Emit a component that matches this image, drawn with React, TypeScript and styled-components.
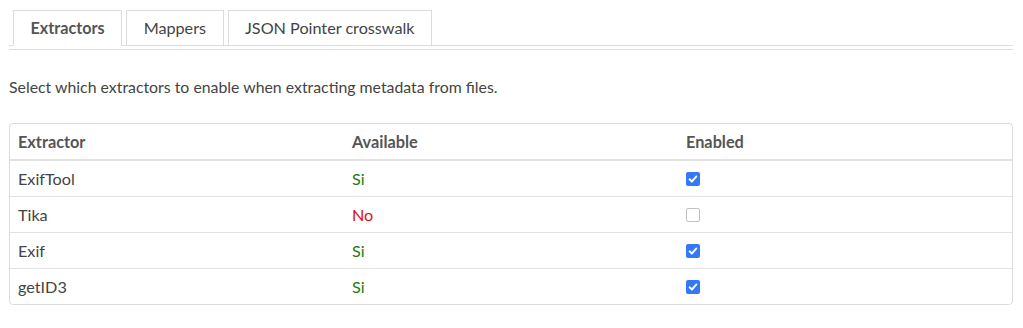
import styled, { createGlobalStyle } from 'styled-components'

const GlobalStyle = createGlobalStyle`
	html, body {
		margin: 0;
		padding: 0;
		background: #fff;
	}
	body {
		font-family: Lato, 'Noto Sans', sans-serif;
		color: #4a4a4a;
	}
	* {
		box-sizing: border-box;
	}
`

type Extractor = {
	name: string
	available: boolean
	enabled: boolean
}

const extractors: Extractor[] = [
	{ name: 'ExifTool', available: true, enabled: true },
	{ name: 'Tika', available: false, enabled: false },
	{ name: 'Exif', available: true, enabled: true },
	{ name: 'getID3', available: true, enabled: true },
]

const tabs = ['Extractors', 'Mappers', 'JSON Pointer crosswalk']

const CheckBox: React.FC<{ checked: boolean }> = ({ checked }) => (
	<Box $checked={checked}>
		{checked && (
			<svg width="12" height="12" viewBox="0 0 12 12">
				<path d="M2.6 6.3 L4.9 8.5 L9.4 3.4" fill="none" stroke="#fff" strokeWidth="1.9" strokeLinecap="round" strokeLinejoin="round" />
			</svg>
		)}
	</Box>
)

const App: React.FC = () => {
	return (
		<>
			<GlobalStyle />
			<Page>
				<TabList>
					{tabs.map((t, i) => (
						<Tab key={t} $active={i === 0}>
							{t}
						</Tab>
					))}
				</TabList>
				<Panel>
					<Intro>Select which extractors to enable when extracting metadata from files.</Intro>
					<TableWrap>
						<Table>
							<thead>
								<tr>
									<Th>Extractor</Th>
									<Th>Available</Th>
									<Th>Enabled</Th>
								</tr>
							</thead>
							<tbody>
								{extractors.map((e) => (
									<Row key={e.name}>
										<Td>{e.name}</Td>
										<Td>
											<Status $ok={e.available}>{e.available ? 'Si' : 'No'}</Status>
										</Td>
										<Td>
											<CheckBox checked={e.enabled} />
										</Td>
									</Row>
								))}
							</tbody>
						</Table>
					</TableWrap>
				</Panel>
			</Page>
		</>
	)
}

export default App

const Page = styled.div`
	padding: 10px 10px 0 9px;
`
const TabList = styled.ul`
	display: flex;
	gap: 4px;
	margin: 0;
	padding: 0 0 0 4px;
	list-style: none;
	border-bottom: 1px solid #dcdcdc;
`
const Tab = styled.li<{ $active: boolean }>`
	height: 36px;
	margin-bottom: -1px;
	padding: 0 16.5px;
	border: 1px solid #dcdcdc;
	border-bottom-color: ${(p) => (p.$active ? '#fff' : '#dcdcdc')};
	background: #fff;
	font-size: 16.2px;
	line-height: 34px;
	font-weight: ${(p) => (p.$active ? 700 : 400)};
	color: ${(p) => (p.$active ? '#555' : '#444')};
	cursor: pointer;
`
const Panel = styled.div`
	margin-top: 3px;
	border-top: 1px solid #dcdcdc;
`
const Intro = styled.p`
	margin: 27px 0 26px;
	font-size: 15.85px;
	line-height: 20px;
	color: #444;
`
const TableWrap = styled.div`
	border: 1px solid #dcdcdc;
	border-radius: 4px;
	overflow: hidden;
`
const Table = styled.table`
	width: 100%;
	border-collapse: collapse;
	table-layout: fixed;
`
const Th = styled.th`
	height: 36px;
	padding: 0 8px;
	text-align: left;
	font-size: 16.3px;
	font-weight: 700;
	color: #555;
	border-bottom: 2px solid #e2e2e2;
`
const Row = styled.tr`
	& + & td {
		border-top: 1px solid #e2e2e2;
	}
`
const Td = styled.td`
	height: 36px;
	padding: 0 8px;
	font-size: 16.2px;
	color: #444;
	vertical-align: middle;
`
const Status = styled.span<{ $ok: boolean }>`
	color: ${(p) => (p.$ok ? '#237a12' : '#e00d0d')};
`
const Box = styled.span<{ $checked: boolean }>`
	display: inline-flex;
	align-items: center;
	justify-content: center;
	width: 14px;
	height: 14px;
	margin-top: 3px;
	border-radius: 2px;
	background: ${(p) => (p.$checked ? '#3478f6' : '#fff')};
	border: ${(p) => (p.$checked ? 'none' : '1.5px solid #c3c3c3')};
	vertical-align: top;
`
